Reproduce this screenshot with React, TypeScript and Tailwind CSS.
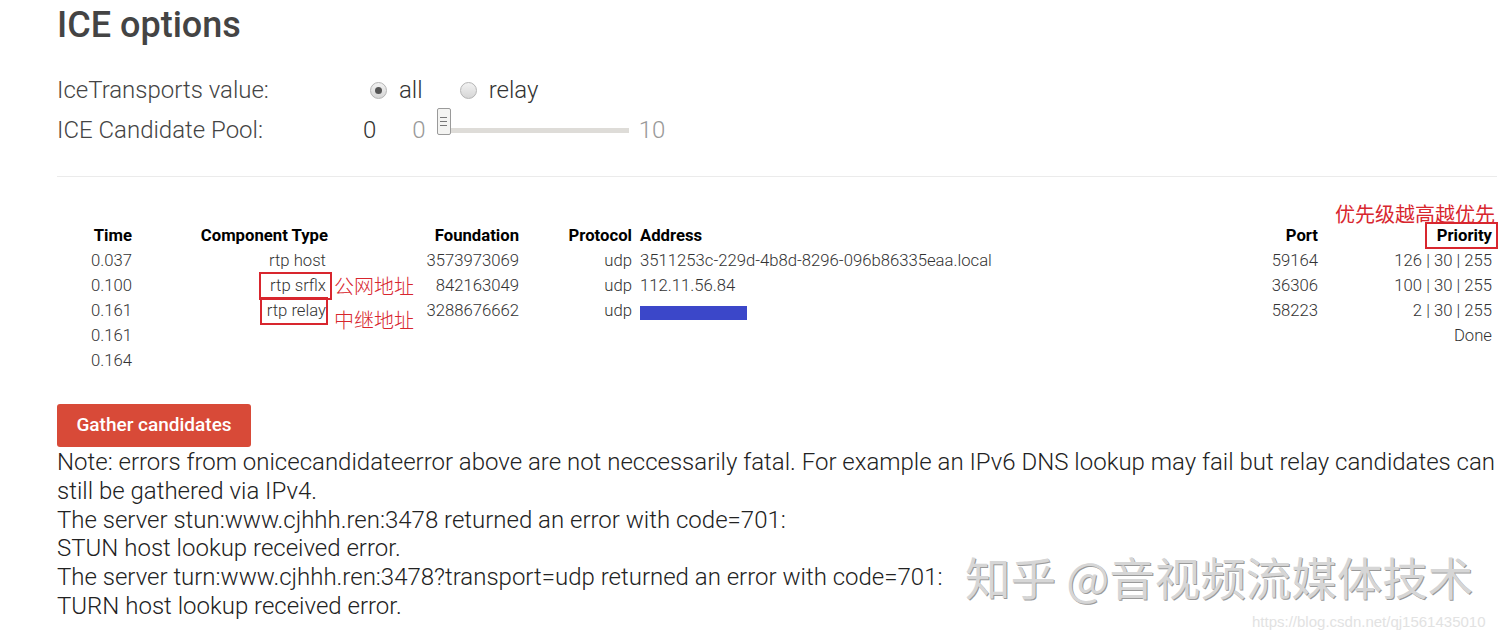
const ROWS = [
  { time: "0.037", comp: "rtp host", found: "3573973069", proto: "udp", addr: "3511253c-229d-4b8d-8296-096b86335eaa.local", port: "59164", prio: "126 | 30 | 255" },
  { time: "0.100", comp: "rtp srflx", found: "842163049", proto: "udp", addr: "112.11.56.84", port: "36306", prio: "100 | 30 | 255", mark: "公网地址", markTop: "top-[1px]", box: "-left-[11px] -right-[6px]" },
  { time: "0.161", comp: "rtp relay", found: "3288676662", proto: "udp", addr: "", hidden: true, port: "58223", prio: "2 | 30 | 255", mark: "中继地址", markTop: "top-[10px]", box: "-left-[7px] -right-[2px]" },
  { time: "0.161", comp: "", found: "", proto: "", addr: "", port: "", prio: "Done" },
  { time: "0.164", comp: "", found: "", proto: "", addr: "", port: "", prio: "" },
];

const NOTES = [
  "Note: errors from onicecandidateerror above are not neccessarily fatal. For example an IPv6 DNS lookup may fail but relay candidates can still be gathered via IPv4.",
  "The server stun:www.cjhhh.ren:3478 returned an error with code=701:",
  "STUN host lookup received error.",
  "The server turn:www.cjhhh.ren:3478?transport=udp returned an error with code=701:",
  "TURN host lookup received error.",
];

function Radio({ checked }: { checked?: boolean }) {
  return (
    <span className="flex h-[17px] w-[17px] items-center justify-center rounded-full border border-[#b5b5b5] bg-gradient-to-b from-[#f2f2f2] to-[#d6d6d6]">
      {checked && <span className="h-[7px] w-[7px] rounded-full bg-[#555]" />}
    </span>
  );
}

export default function App() {
  return (
    <div className="relative h-[641px] w-[1508px] overflow-hidden bg-white pl-[57px] pr-[11px] font-['Roboto',sans-serif] text-[#444]">
      <h1 className="pt-px text-[36px] font-medium leading-[48px] text-[#444]">ICE options</h1>

      <div className="mt-[21px] font-light text-[24px] leading-[40px]">
        <div className="flex items-center">
          <span className="w-[313px]">IceTransports value:</span>
          <Radio checked />
          <span className="ml-[12px] text-[#333]">all</span>
          <span className="ml-[37px]"><Radio /></span>
          <span className="ml-[12px] text-[#333]">relay</span>
        </div>
        <div className="flex items-center">
          <span className="w-[306px]">ICE Candidate Pool:</span>
          <span className="text-[#333]">0</span>
          <span className="ml-[36px] text-[#999]">0</span>
          <span className="relative ml-[11px] flex h-[40px] w-[192px] items-center">
            <span className="h-[5px] w-full bg-[#dedcd8]" />
            <span className="absolute left-0 top-[-2px] flex h-[27px] w-[14px] flex-col items-center justify-center gap-[3px] rounded-[2px] border border-[#9a9a9a] bg-[#f4f4f2]">
              <span className="h-px w-[7px] bg-[#777]" />
              <span className="h-px w-[7px] bg-[#777]" />
              <span className="h-px w-[7px] bg-[#777]" />
            </span>
          </span>
          <span className="ml-[10px] text-[#999]">10</span>
        </div>
      </div>

      <div className="mt-[26px] h-px w-[1440px] bg-[#ebebeb]" />

      <div className="relative mt-[46px]">
        <span className="absolute left-[1278px] top-[-21px] text-[20px] leading-[24px] text-[#d8262e] font-['Noto_Sans_CJK_SC',sans-serif]">优先级越高越优先</span>
        <table className="table-fixed border-collapse text-[16.7px] leading-[25px]">
          <colgroup>
            <col className="w-[79px]" />
            <col className="w-[196px]" />
            <col className="w-[191px]" />
            <col className="w-[113px]" />
            <col className="w-[586px]" />
            <col className="w-[100px]" />
            <col className="w-[174px]" />
          </colgroup>
          <thead>
            <tr className="text-black">
              <th className="pr-1 text-right font-bold">Time</th>
              <th className="pr-1 text-right font-bold">Component Type</th>
              <th className="pr-1 text-right font-bold">Foundation</th>
              <th className="pr-1 text-right font-bold">Protocol</th>
              <th className="pl-1 text-left font-bold">Address</th>
              <th className="pr-1 text-right font-bold">Port</th>
              <th className="pr-1 text-right font-bold">
                <span className="relative inline-block">
                  Priority
                  <span className="absolute -left-[12px] -right-[6px] top-[-1px] bottom-[-1px] border-2 border-[#d8262e]" />
                </span>
              </th>
            </tr>
          </thead>
          <tbody className="font-light text-[#333]">
            {ROWS.map((r, i) => (
              <tr key={i}>
                <td className="pr-1 text-right">{r.time}</td>
                <td className="pr-[6px] text-right">
                  {r.mark ? (
                    <span className="relative inline-block">
                      {r.comp}
                      <span className={`absolute ${r.box} top-[-1px] bottom-[-2px] border-2 border-[#d8262e]`} />
                      <span className={`absolute left-full ${r.markTop} ml-[8px] whitespace-nowrap text-[20px] leading-[24px] text-[#d8262e] font-['Noto_Sans_CJK_SC',sans-serif]`}>{r.mark}</span>
                    </span>
                  ) : (
                    r.comp
                  )}
                </td>
                <td className="pr-1 text-right">{r.found}</td>
                <td className="pr-1 text-right">{r.proto}</td>
                <td className="pl-1 text-left">
                  {r.hidden ? <span className="inline-block h-[14px] w-[107px] translate-y-[1px] bg-[#3b47c9] align-middle" /> : r.addr}
                </td>
                <td className="pr-1 text-right">{r.port}</td>
                <td className="pr-1 text-right">{r.prio}</td>
              </tr>
            ))}
          </tbody>
        </table>
      </div>

      <button className="mt-[31px] h-[43px] w-[194px] rounded-[3px] bg-[#d84a38] text-[19px] font-medium text-white">Gather candidates</button>

      <div className="mt-px w-[1448px] text-[24px] font-light leading-[28.8px] text-[#222]">
        {NOTES.map((n, i) => (
          <div key={i}>{n}</div>
        ))}
      </div>

      <div className="pointer-events-none absolute left-[965px] top-[548px] text-[45.5px] leading-[56px] text-[#d6d6d6] [text-shadow:1px_1px_0_#9a9a9a] font-['Noto_Sans_CJK_SC',sans-serif]">
        知乎 @音视频流媒体技术
      </div>
      <div className="pointer-events-none absolute left-[1252px] top-[612px] text-[15px] leading-[20px] text-[#e2e2e2] font-['Liberation_Sans',sans-serif]">
        https://blog.csdn.net/qj1561435010
      </div>
    </div>
  );
}
